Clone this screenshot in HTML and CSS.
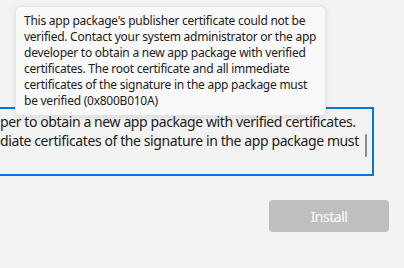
FILE: index.html
```html
<!DOCTYPE html>
<html>
<head>
<meta charset="utf-8">
<link rel="stylesheet" href="styles.css">
</head>
<body>
<div class="page">
  <div class="textbox">
    <div class="tb-text">
      <div class="tb-line">per to obtain a new app package with verified certificates.</div>
      <div class="tb-line">diate certificates of the signature in the app package must</div>
    </div>
    <div class="thumb"></div>
  </div>
  <div class="actions">
    <button class="install">Install</button>
  </div>
  <div class="tooltip">This app package's publisher certificate could not be<br>verified. Contact your system administrator or the app<br>developer to obtain a new app package with verified<br>certificates. The root certificate and all immediate<br>certificates of the signature in the app package must<br>be verified (0x800B010A)</div>
</div>
</body>
</html>
```

FILE: styles.css
```css
html, body {
  margin: 0;
  padding: 0;
  background: #f3f3f3;
}
.page {
  position: relative;
  width: 404px;
  height: 268px;
  overflow: hidden;
  font-family: "Noto Sans", "Open Sans", sans-serif;
  color: #1b1b1b;
}
.textbox {
  position: relative;
  margin-top: 107px;
  width: 372px;
  height: 65px;
  border: 2px solid #0078d4;
  border-left: none;
  overflow: hidden;
}
.tb-text {
  padding-top: 3px;
  font-size: 14px;
  line-height: 19px;
  letter-spacing: -0.4px;
  white-space: nowrap;
}
.tb-line {
  margin-left: 0;
}
.thumb {
  position: absolute;
  right: 5px;
  top: 25px;
  width: 2px;
  height: 23px;
  background: #8a8a8a;
  border-radius: 1px;
}
.actions {
  display: flex;
  justify-content: flex-end;
  padding-right: 15px;
  margin-top: 24px;
}
.install {
  width: 120px;
  height: 32px;
  border: none;
  border-radius: 4px;
  background: #bfbfbf;
  color: #ffffff;
  font-family: "Noto Sans", "Open Sans", sans-serif;
  font-size: 14px;
  letter-spacing: -0.5px;
  padding: 0;
}
.tooltip {
  position: absolute;
  left: 15px;
  top: 6px;
  width: 293px;
  height: 96px;
  padding: 6px 8px 6px 8px;
  background: #f9f9f9;
  border: 1px solid #e5e5e5;
  border-radius: 5px;
  box-shadow: 0 2px 6px rgba(0,0,0,0.10);
  font-size: 12px;
  line-height: 16px;
  letter-spacing: -0.25px;
  white-space: nowrap;
  color: #1b1b1b;
}
```
